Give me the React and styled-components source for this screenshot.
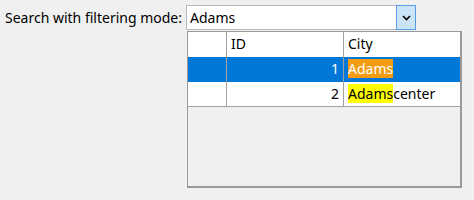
import React from 'react';
import styled, { createGlobalStyle } from 'styled-components';

const GlobalStyle = createGlobalStyle`
  html, body {
    margin: 0;
    padding: 0;
    background: #f0f0f0;
  }
  body {
    font-family: "Noto Sans", "Open Sans", sans-serif;
    font-size: 14px;
    color: #000;
  }
`;

const Page = styled.div`
  position: relative;
  width: 474px;
  height: 200px;
  background: #f0f0f0;
`;

const Row = styled.div`
  display: flex;
  align-items: center;
  padding: 5px 0 0 5px;
  gap: 5px;
`;

const Label = styled.span`
  white-space: nowrap;
  width: 176px;
`;

const Combo = styled.div`
  position: relative;
  display: flex;
  width: 230px;
  height: 25px;
  box-sizing: border-box;
  border: 1px solid #b8b8b8;
  background: #fff;
`;

const ComboText = styled.div`
  flex: 1;
  padding-left: 3px;
  line-height: 23px;
`;

const DropButton = styled.div`
  width: 20px;
  margin: -1px -1px -1px 0;
  box-sizing: border-box;
  border: 1px solid #569de5;
  background: #cce4f7;
  display: flex;
  align-items: center;
  justify-content: center;
`;

const Popup = styled.div`
  position: absolute;
  left: 0px;
  top: 25px;
  width: 275px;
  height: 157px;
  box-sizing: border-box;
  border: 1px solid #9a9a9a;
  border-right-width: 2px;
  border-bottom-width: 2px;
  background: #f0f0f0;
`;

const Grid = styled.div`
  display: grid;
  grid-template-columns: 39px 117px 1fr;
`;

const Cell = styled.div`
  height: 25px;
  box-sizing: border-box;
  line-height: 24px;
  padding: 0 4px;
  white-space: nowrap;
  background: ${p => (p.$selected ? '#0078d7' : '#fff')};
  color: ${p => (p.$selected ? '#fff' : '#000')};
  text-align: ${p => (p.$right ? 'right' : 'left')};
  border-right: ${p => (p.$last ? 'none' : '1px solid #a0a0a0')};
  border-bottom: ${p => (p.$bottom ? '1px solid #a0a0a0' : 'none')};
`;

const Mark = styled.span`
  background: ${p => (p.$selected ? '#f39c12' : '#ffff00')};
`;

const rows = [
  { id: 1, city: 'Adams', rest: '', selected: true },
  { id: 2, city: 'Adams', rest: 'center', selected: false },
];

const Chevron = () => (
  <svg width="9" height="6" viewBox="0 0 9 6">
    <path d="M1 1 L4.5 4.5 L8 1" fill="none" stroke="#000" strokeWidth="1.6" />
  </svg>
);

export default function App() {
  return (
    <Page>
      <GlobalStyle />
      <Row>
        <Label>Search with filtering mode:</Label>
        <Combo>
          <ComboText>Adams</ComboText>
          <DropButton>
            <Chevron />
          </DropButton>
          <Popup>
            <Grid>
              <Cell />
              <Cell>ID</Cell>
              <Cell $last>City</Cell>
              {rows.map((r, i) => (
                <React.Fragment key={r.id}>
                  <Cell $selected={r.selected} $bottom={i === rows.length - 1} />
                  <Cell $selected={r.selected} $right $bottom={i === rows.length - 1}>
                    {r.id}
                  </Cell>
                  <Cell $selected={r.selected} $last $bottom={i === rows.length - 1}>
                    <Mark $selected={r.selected}>{r.city}</Mark>
                    {r.rest}
                  </Cell>
                </React.Fragment>
              ))}
            </Grid>
          </Popup>
        </Combo>
      </Row>
    </Page>
  );
}
